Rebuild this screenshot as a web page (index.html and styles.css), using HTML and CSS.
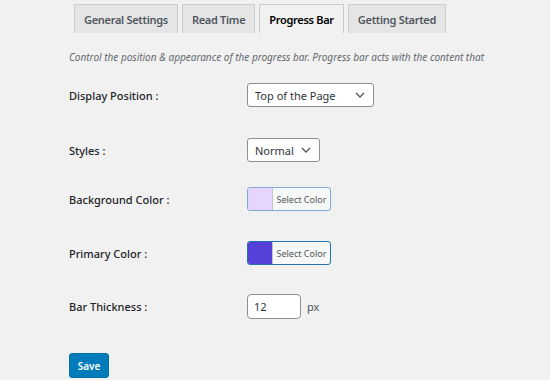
FILE: index.html
```html
<!DOCTYPE html>
<html>
<head>
<meta charset="utf-8">
<link rel="stylesheet" href="styles.css">
</head>
<body>
<div class="wrap">
  <nav class="tabs">
    <a class="tab">General Settings</a>
    <a class="tab">Read Time</a>
    <a class="tab active">Progress Bar</a>
    <a class="tab">Getting Started</a>
  </nav>
  <p class="desc">Control the position &amp; appearance of the progress bar. Progress bar acts with the content that</p>
  <div class="form">
    <div class="row r1">
      <div class="label">Display Position :</div>
      <div class="select wide"><span>Top of the Page</span><svg class="chev" width="10" height="6" viewBox="0 0 10 6"><path d="M1 1l4 4 4-4" fill="none" stroke="#50575e" stroke-width="1.3"/></svg></div>
    </div>
    <div class="row r2">
      <div class="label">Styles :</div>
      <div class="select narrow"><span>Normal</span><svg class="chev" width="10" height="6" viewBox="0 0 10 6"><path d="M1 1l4 4 4-4" fill="none" stroke="#50575e" stroke-width="1.3"/></svg></div>
    </div>
    <div class="row r3">
      <div class="label">Background Color :</div>
      <div class="color light"><span class="swatch sw-light"></span><span class="ctext">Select Color</span></div>
    </div>
    <div class="row r4">
      <div class="label">Primary Color :</div>
      <div class="color dark"><span class="swatch sw-dark"></span><span class="ctext">Select Color</span></div>
    </div>
    <div class="row r5">
      <div class="label">Bar Thickness :</div>
      <div class="numwrap"><div class="num">12</div><span class="unit">px</span></div>
    </div>
  </div>
  <button class="save">Save</button>
</div>
</body>
</html>
```
FILE: styles.css
```css
html, body {
  margin: 0;
  padding: 0;
  background: #f1f1f1;
  font-family: "Noto Sans", "Open Sans", sans-serif;
  color: #1d2327;
}
.wrap {
  padding: 4px 0 0 69px;
}
.tabs {
  display: flex;
  gap: 4px;
  margin-left: 5px;
  height: 29px;
}
.tab {
  display: flex;
  align-items: center;
  box-sizing: border-box;
  height: 29px;
  padding: 0 9px;
  border: 1px solid #cccccc;
  border-bottom: none;
  background: #e5e5e5;
  color: #50575e;
  font-size: 11px;
  font-weight: 600;
  letter-spacing: -0.3px;
}
.tab.active {
  background: #f1f1f1;
  color: #000;
}
.desc {
  margin: 17px 0 0 0;
  font-size: 10px;
  font-style: italic;
  color: #646970;
  white-space: nowrap;
}
.form {
  display: flex;
  flex-direction: column;
}
.row {
  display: flex;
  align-items: center;
}
.r1 { margin-top: 19px; }
.r2 { margin-top: 31px; }
.r3 { margin-top: 25px; }
.r4 { margin-top: 30px; }
.r5 { margin-top: 29px; }
.label {
  width: 178px;
  font-size: 11px;
  font-weight: 500;
  color: #1d2327;
}
.select {
  box-sizing: border-box;
  height: 24px;
  display: flex;
  align-items: center;
  justify-content: space-between;
  padding: 0 8px 0 7px;
  background: #fff;
  border: 1px solid #8c8f94;
  border-radius: 3px;
  font-size: 11px;
  color: #2c3338;
}
.select.wide { width: 127px; }
.select.narrow { width: 73px; }
.chev { display: block; }
.color {
  box-sizing: border-box;
  width: 84px;
  height: 24px;
  display: flex;
  border-radius: 3px;
  overflow: hidden;
  background: #f6f7f7;
}
.color.light { border: 1px solid #7fa8d6; }
.color.dark { border: 1px solid #2271b1; }
.swatch {
  width: 24px;
  height: 100%;
  border-right: 1px solid #c3c4c7;
}
.sw-light { background: #e6d5ff; }
.sw-dark { background: #5541d9; }
.ctext {
  flex: 1;
  display: flex;
  align-items: center;
  justify-content: center;
  font-size: 9px;
  color: #50575e;
}
.numwrap {
  display: flex;
  align-items: center;
}
.num {
  box-sizing: border-box;
  width: 54px;
  height: 25px;
  background: #fff;
  border: 1px solid #8c8f94;
  border-radius: 4px;
  padding-left: 6px;
  display: flex;
  align-items: center;
  font-size: 11px;
  color: #2c3338;
}
.unit {
  margin-left: 6px;
  font-size: 11px;
  color: #50575e;
}
.save {
  display: block;
  margin-top: 34px;
  width: 40px;
  height: 25px;
  padding: 0;
  border: 1px solid #0071a1;
  border-radius: 3px;
  background: #007cba;
  color: #fff;
  font-family: "Noto Sans", "Open Sans", sans-serif;
  font-size: 10px;
  font-weight: 600;
}
```
